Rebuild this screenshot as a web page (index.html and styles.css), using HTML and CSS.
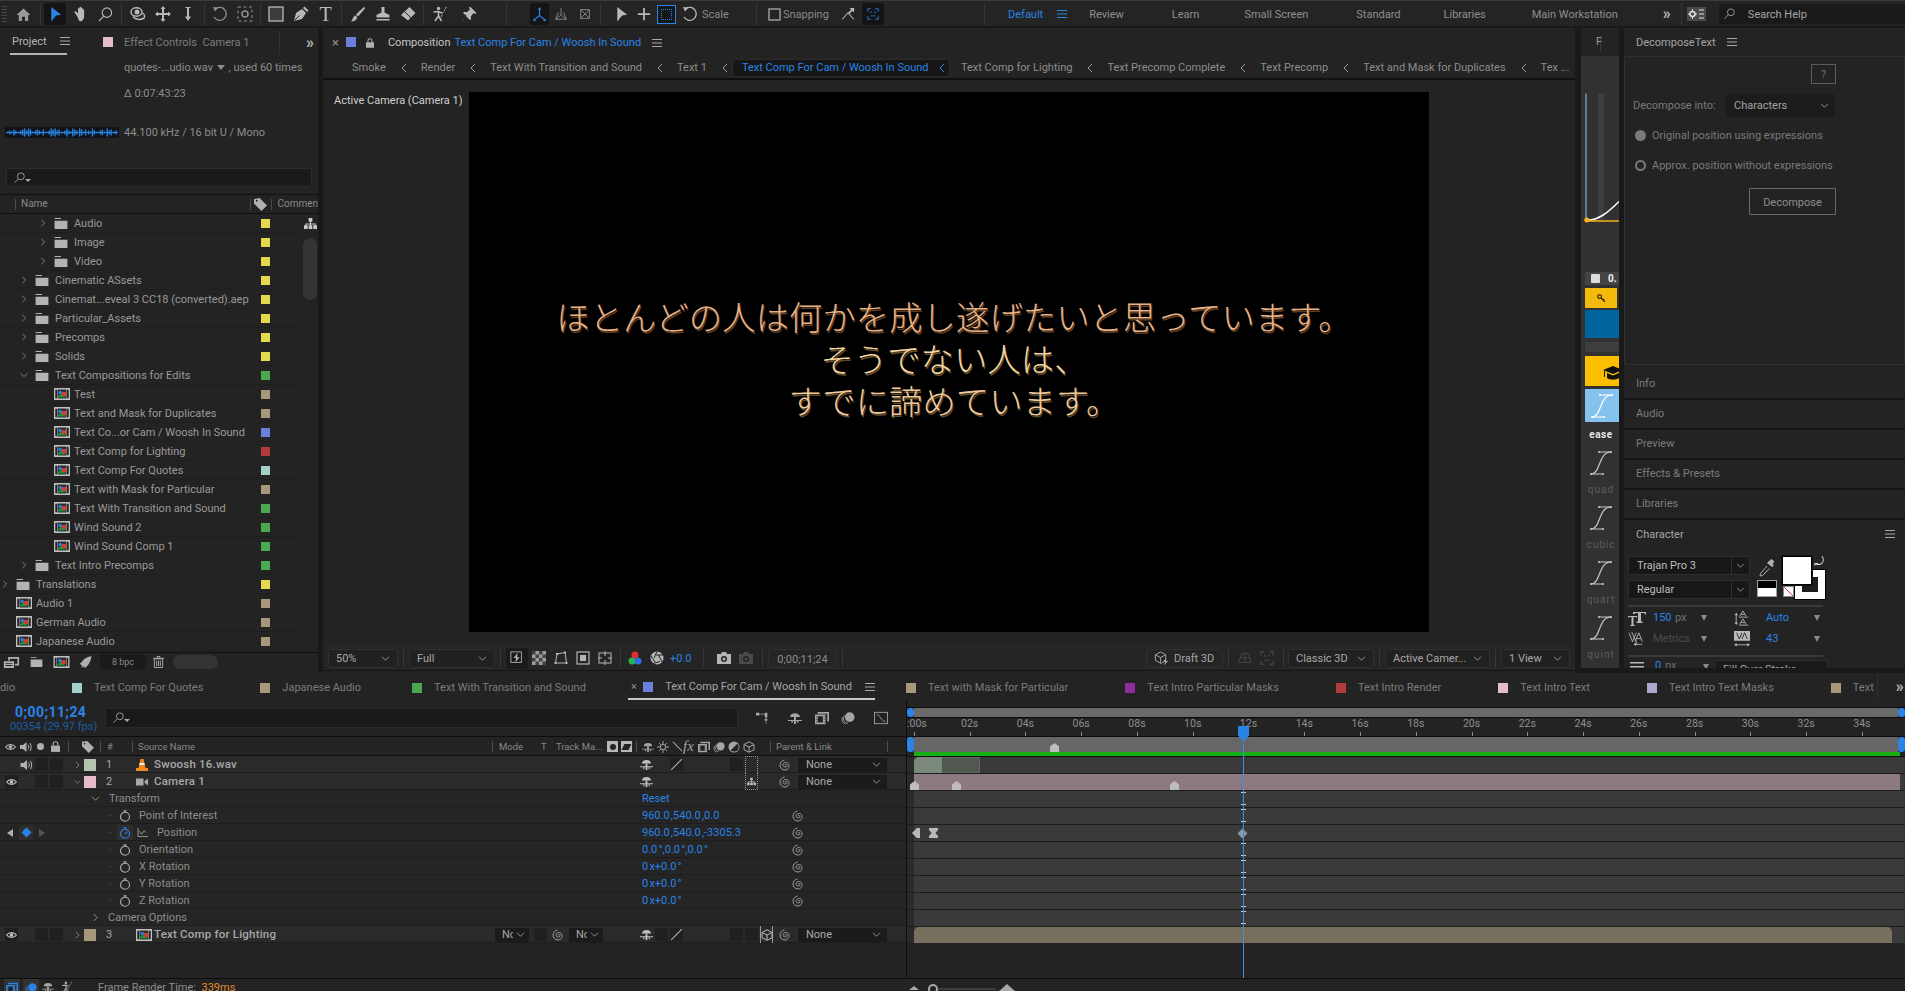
FILE: index.html
```html
<!DOCTYPE html>
<html>
<head>
    <meta charset="UTF-8">
    <meta name="viewport" content="width=device-width, initial-scale=1">
    <title>After Effects</title>
    <link rel="stylesheet" href="styles.css">
</head>
<body>
<svg class="defs" width="0" height="0">
    <symbol id="i-home" viewBox="0 0 16 16"><path fill="currentColor" d="M8 1.5 15.5 8.6H13V15H9.6V10.4H6.4V15H3V8.6H.5Z"/></symbol>
    <symbol id="i-arrow" viewBox="0 0 16 16"><path fill="currentColor" d="M3.5 0 14 8.2 8.6 9 3.5 15.5Z"/></symbol>
    <symbol id="i-hand" viewBox="0 0 16 16"><path fill="currentColor" d="M4 10 1.6 6.6c-.7-1.1.8-2 1.5-1L5 7.6V2.8c0-1.1 1.5-1.1 1.5 0V6.6V1.6c0-1.1 1.6-1.1 1.6 0v5V2.4c0-1.1 1.5-1.1 1.5 0v4.7V4c0-1.1 1.5-1.1 1.5 0v6.6c0 3-2 4.900-3.900 4.900C6 15.500 5.200 12.200 4 10Z"/></symbol>
    <symbol id="i-zoom" viewBox="0 0 16 16"><g fill="none" stroke="currentColor" stroke-width="1.2"><circle cx="9.500" cy="6" r="5"/><path d="M6 9.700 1 15"/></g></symbol>
    <symbol id="i-orbit" viewBox="0 0 16 16"><g fill="none" stroke="currentColor" stroke-width="1.500"><ellipse cx="6.500" cy="6" rx="5.500" ry="4.200"/><path d="M3 10.500c2 3 7 4 11 1.500 1.500-2 0-4-1.500-5"/></g><circle cx="7" cy="6" r="2.500" fill="currentColor"/></symbol>
    <symbol id="i-pan" viewBox="0 0 16 16"><path fill="currentColor" d="M8 0 10.500 3H9V7H13V5.500L16 8 13 10.500V9H9V13H10.500L8 16 5.500 13H7V9H3V10.500L0 8 3 5.500V7H7V3H5.500Z"/></symbol>
    <symbol id="i-dolly" viewBox="0 0 16 16"><path fill="currentColor" d="M5.500 1h5v1H9v8.500h2L8 15 5 10.500h2V2H5.500Z"/></symbol>
    <symbol id="i-rotate" viewBox="0 0 16 16"><path fill="none" stroke="currentColor" stroke-width="1.300" d="M4 2.500A6.500 6.500 0 1 1 2 11"/><path fill="currentColor" d="M1 1 6.500 1.500 3 5.500Z"/></symbol>
    <symbol id="i-anchor" viewBox="0 0 16 16"><rect x="1" y="1" width="14" height="14" fill="none" stroke="currentColor" stroke-dasharray="3 2.500"/><circle cx="8" cy="8" r="3" fill="none" stroke="currentColor" stroke-width="1.500"/></symbol>
    <symbol id="i-rect" viewBox="0 0 16 16"><rect x="1" y="1" width="14" height="14" fill="#3c3c3c" stroke="currentColor" stroke-width="1.300"/></symbol>
    <symbol id="i-pen" viewBox="0 0 16 16"><path fill="currentColor" d="M1 15 3 7 9 3 13 7 9 13ZM10 2 11.500.5 15.500 4.500 14 6Z"/><path stroke="#232323" d="M1.500 14.500 6.500 9.500"/></symbol>
    <symbol id="i-brush" viewBox="0 0 16 16"><path fill="currentColor" d="M14.500 1c.7.5.7 1 .2 1.800L8 10.500 6 8.800C8 6.500 12.500 2 14.500 1ZM5.300 9.500 7.300 11.200C6.500 14.500 3.500 15.500 1 15.500 3 14 2.800 10 5.300 9.500Z"/></symbol>
    <symbol id="i-stamp" viewBox="0 0 16 16"><path fill="currentColor" d="M6.500 1h3v5.500L14.500 9v2.500h-13V9l5-2.500ZM1.500 13h13v1.500h-13Z"/></symbol>
    <symbol id="i-eraser" viewBox="0 0 16 16"><path fill="currentColor" d="M9.500 1 15.500 7 8 14.500 1 9Z"/><path stroke="#232323" d="M4.500 5.500 11 12"/></symbol>
    <symbol id="i-roto" viewBox="0 0 16 16"><circle cx="6.500" cy="2.500" r="1.700" fill="currentColor"/><path fill="none" stroke="currentColor" stroke-width="1.600" d="M1.500 6 6.500 5.500 10 7M6.500 5.500V10L3 15M6.500 10 9.500 15"/><path fill="none" stroke="currentColor" d="M14.500 1 10.500 7.500 9 12" stroke-dasharray="2 1"/></symbol>
    <symbol id="i-pin" viewBox="0 0 16 16"><path fill="currentColor" d="M9 .5 15.500 7 14 8 12.500 7 9.800 10.500 10.200 13 8.800 14 5 10 1 15 1 14.500 5.500 9.800 2 7 3 5.800 5.800 6.200 9 3.500 8 2Z"/></symbol>
    <symbol id="i-axis-a" viewBox="0 0 16 16"><g fill="none" stroke="currentColor" stroke-width="1.300"><path d="M8 1V9L2 14M8 9 14 14"/></g><path fill="currentColor" d="M8 0 10 3H6ZM1 12 2 15.500 4.500 14ZM15 12 14 15.500 11.500 14Z"/></symbol>
    <symbol id="i-axis-b" viewBox="0 0 16 16"><g fill="none" stroke="currentColor"><path d="M8 1V9L2 14H14L8 9M5 6 2 14M11 6 14 14"/></g></symbol>
    <symbol id="i-axis-c" viewBox="0 0 16 16"><g fill="none" stroke="currentColor"><path d="M3 3 13 13M13 3 3 13M3 3H13V13H3Z"/></g></symbol>
    <symbol id="i-move" viewBox="0 0 16 16"><path fill="none" stroke="currentColor" stroke-width="2" d="M8 1V15M1 8H15"/></symbol>
    <symbol id="i-magnet" viewBox="0 0 16 16"><path fill="none" stroke="currentColor" stroke-width="1.200" d="M1.500 14 8 6.500 14.500 14"/><path fill="currentColor" d="M10 1h5v5L13 4.500 9.500 8 8 6.500 11.500 3Z"/></symbol>
    <symbol id="i-snap" viewBox="0 0 16 16"><g fill="none" stroke="currentColor" stroke-width="1.200"><path d="M1 5V1H5M11 1H15V5M15 11V15H11M5 15H1V11"/></g><circle cx="5.500" cy="5.500" r="1" fill="currentColor"/><circle cx="10.500" cy="5.500" r="1" fill="currentColor"/><path stroke="currentColor" d="M5 10.500H11"/></symbol>
    <symbol id="i-sync" viewBox="0 0 19 14"><rect width="19" height="14" fill="#4a4a4a"/><circle cx="5.500" cy="7" r="2.500" fill="none" stroke="#e0e0e0" stroke-width="1.500"/><path stroke="#e0e0e0" d="M5.500 2V4M5.500 10V12M1 7H3M8 7H10M12 3H17M12 7H17M12 11H17"/></symbol>
    <symbol id="i-folder" viewBox="0 0 14 12"><path fill="#b3b3b3" d="M0 3H14V12H0ZM0 0H7V1H0Z"/></symbol>
    <symbol id="i-comp" viewBox="0 0 16 12"><path fill="#bfbfbf" d="M0 0H16V12H0Z"/><path fill="#232323" d="M1.300 1.800H3V10.200H1.300ZM13 1.800H14.700V10.200H13Z"/><path fill="#2d2d2d" d="M3.500 1.500H12.500V10.500H3.500Z"/><path fill="#1e8f3c" d="M4 8 8 5 12 9.500H4Z"/><path fill="#d23c31" d="M8 4H12V8H8Z"/><circle cx="6.200" cy="4.600" r="1.800" fill="#2f7bd8"/></symbol>
    <symbol id="i-chev-r" viewBox="0 0 8 10"><path fill="none" stroke="currentColor" d="M2 1 6 5 2 9"/></symbol>
    <symbol id="i-chev-d" viewBox="0 0 10 8"><path fill="none" stroke="currentColor" d="M1 2 5 6 9 2"/></symbol>
    <symbol id="i-chev-l" viewBox="0 0 8 10"><path fill="none" stroke="currentColor" d="M6 1 2 5 6 9"/></symbol>
    <symbol id="i-menu" viewBox="0 0 10 8"><path stroke="currentColor" d="M0 .5H10M0 4H10M0 7.500H10"/></symbol>
    <symbol id="i-search" viewBox="0 0 14 14"><g fill="none" stroke="currentColor"><circle cx="8" cy="5" r="4"/><path d="M5 8 .5 12.500"/></g></symbol>
    <symbol id="i-tag" viewBox="0 0 14 14"><path fill="currentColor" d="M0 1 6 0 14 8 8 14 0 6Z"/><circle cx="3" cy="3" r="1" fill="#232323"/></symbol>
    <symbol id="i-tree" viewBox="0 0 14 14"><path fill="currentColor" d="M5 1H9V5H5ZM0 9H4V13H0ZM5 9H9V13H5ZM10 9H14V13H10ZM6.500 5H7.500V7H12.500V9H11.500V8H7.500V9H6.500V8H2.500V9H1.500V7H6.500Z"/></symbol>
    <symbol id="i-eye" viewBox="0 0 12 8"><path fill="none" stroke="currentColor" stroke-width="1.200" d="M.6 4C3 .6 9 .6 11.400 4 9 7.400 3 7.400 .6 4Z"/><circle cx="6" cy="4" r="2" fill="currentColor"/></symbol>
    <symbol id="i-speaker" viewBox="0 0 12 12"><path fill="currentColor" d="M0 4H3L6.500 1V11L3 8H0Z"/><path fill="none" stroke="currentColor" d="M8 3.500C9 5 9 7 8 8.500M10 2C11.500 4.500 11.500 7.500 10 10"/></symbol>
    <symbol id="i-lock" viewBox="0 0 10 12"><path fill="currentColor" d="M0 5H10V12H0Z"/><path fill="none" stroke="currentColor" stroke-width="1.300" d="M2.500 5V3C2.500 0 7.500 0 7.500 3V5"/></symbol>
    <symbol id="i-shy" viewBox="0 0 14 12"><path fill="currentColor" d="M2 5C2.500 0 11.500 0 12 5ZM0 8H14V9H0Z"/><path fill="currentColor" d="M6 5H8V12H6ZM3.500 9H5L4.500 11H3.500ZM9 9H10.500V11H9.500Z"/></symbol>
    <symbol id="i-spiral" viewBox="0 0 12 12"><path fill="none" stroke="currentColor" d="M6 6.300C6 5 8 5.200 8 6.500 8 8.500 4.500 8.600 4 6.400 3.500 3.600 7.500 2.500 9.300 4.500 11.200 7 9.300 11 6 11 3 11 .8 8.700 1 6 1.200 3.500 3 1.400 5.500 1"/></symbol>
    <symbol id="i-watch" viewBox="0 0 12 12"><g fill="none" stroke="currentColor" stroke-width="1.100"><circle cx="6" cy="6.800" r="4.500"/><path d="M4.500 .8H7.500M6 .8V2.300"/></g></symbol>
    <symbol id="i-watch-on" viewBox="0 0 12 12"><g fill="none" stroke="currentColor" stroke-width="1.100"><circle cx="6" cy="6.800" r="4.500"/><path d="M4.500 .8H7.500M6 .8V2.300M6 7 8.300 4.700"/></g></symbol>
    <symbol id="i-graph" viewBox="0 0 12 10"><path fill="none" stroke="currentColor" d="M1 0V9.500H12M2 3 5 7 8 3 9.500 5"/></symbol>
    <symbol id="i-cam" viewBox="0 0 12 9"><path fill="currentColor" d="M0 1H7.500V8H0ZM8.500 3.800 12 1V8L8.500 5.200Z"/></symbol>
    <symbol id="i-cone" viewBox="0 0 12 12"><path fill="#f08a1e" d="M4.500 0H7.500L9.500 9H12V12H0V9H2.500Z"/><path fill="#eee" d="M3.700 4H8.300L8.700 6H3.300Z"/></symbol>
    <symbol id="i-cube" viewBox="0 0 12 12"><path fill="none" stroke="currentColor" d="M6 .8 11 3.500V8.800L6 11.200 1 8.800V3.500ZM1 3.500 6 6 11 3.500M6 6V11.200"/></symbol>
    <symbol id="i-ease" viewBox="0 0 24 26"><g fill="none" stroke="currentColor"><path d="M2 24C12 24 9 2 22 2" stroke-width="1.200"/><path d="M2 24H14M10 2H22"/></g><circle cx="2" cy="24" r="1" fill="currentColor"/><circle cx="14" cy="24" r="1" fill="currentColor"/><circle cx="10" cy="2" r="1" fill="currentColor"/><circle cx="22" cy="2" r="1" fill="currentColor"/></symbol>
    <symbol id="i-bolt" viewBox="0 0 16 16"><rect x="1" y="1" width="12" height="12" fill="none" stroke="currentColor"/><path fill="currentColor" d="M9 2 4 8H7L6 13 11 7H8Z"/></symbol>
    <symbol id="i-checker" viewBox="0 0 14 14"><rect width="14" height="14" fill="#9c9c9c"/><path fill="#444" d="M0 0H3.500V3.500H0ZM7 0H10.500V3.500H7ZM3.500 3.500H7V7H3.500ZM10.500 3.500H14V7H10.500ZM0 7H3.500V10.500H0ZM7 7H10.500V10.500H7ZM3.500 10.500H7V14H3.500ZM10.500 10.500H14V14H10.500Z"/></symbol>
    <symbol id="i-mask" viewBox="0 0 14 14"><path fill="none" stroke="currentColor" d="M3 3 11 1.500 12.500 12H1.500Z"/><path fill="currentColor" d="M2 2H4V4H2ZM10 .5H12V2.500H10ZM.5 11H2.500V13H.5ZM11.500 11H13.500V13H11.500Z"/></symbol>
    <symbol id="i-region" viewBox="0 0 14 14"><rect x="1" y="1" width="12" height="12" fill="none" stroke="currentColor" stroke-width="1.200"/><rect x="4" y="4" width="6" height="6" fill="currentColor"/></symbol>
    <symbol id="i-guides" viewBox="0 0 14 14"><rect x="1" y="2" width="12" height="10" fill="none" stroke="currentColor"/><path stroke="currentColor" d="M7 0V5M7 9V14M0 7H4M10 7H14"/></symbol>
    <symbol id="i-rgb" viewBox="0 0 14 14"><circle cx="7" cy="4" r="3.500" fill="#e52b2b"/><circle cx="4" cy="10" r="3.500" fill="#2bb34a"/><circle cx="10" cy="10" r="3.500" fill="#2b6fe5"/></symbol>
    <symbol id="i-aperture" viewBox="0 0 14 14"><circle cx="7" cy="7" r="6.500" fill="currentColor"/><path fill="none" stroke="#232323" d="M7 .5 4 7M13 4 6 4M12 11 8.500 4M3 12.500 10 10.500M1 5 5 11"/></symbol>
    <symbol id="i-camera" viewBox="0 0 14 12"><path fill="currentColor" d="M0 2H4L5 0H9L10 2H14V12H0Z"/><circle cx="7" cy="7" r="3" fill="#232323"/><circle cx="7" cy="7" r="1.500" fill="currentColor"/></symbol>
    <symbol id="i-draft" viewBox="0 0 16 16"><path fill="none" stroke="currentColor" d="M7 1 12.500 4V9L8 13.500 1.500 10V4ZM1.500 4 7 7 12.500 4M7 7V13"/><path fill="currentColor" d="M13 7 9.500 12H12L10.500 16 15 10.500H12.500Z"/></symbol>
    <symbol id="i-floor" viewBox="0 0 16 12"><path fill="none" stroke="currentColor" d="M4 1H12L15 11H1ZM8 1V11M2.500 6H13.500"/></symbol>
    <symbol id="i-trash" viewBox="0 0 12 13"><path fill="none" stroke="currentColor" d="M1.500 3H10.500V12.500H1.500ZM0 2.500H12M4.500 2.500V.5H7.500V2.500M4 5V11M6 5V11M8 5V11"/></symbol>
    <symbol id="i-footage" viewBox="0 0 18 13"><path fill="currentColor" d="M5 0H18V10H13V8H16V2H7V4H5ZM0 5H12V13H0ZM2 7V8H10V7ZM2 9.500V10.500H10V9.500Z"/></symbol>
    <symbol id="i-rocket" viewBox="0 0 14 14"><path fill="currentColor" d="M14 0C8 1 4 4 2 8L0 9 3 11 2 14 5 12 6 14C10 12 13 7 14 0Z"/></symbol>
    <symbol id="i-flow" viewBox="0 0 16 14"><path fill="currentColor" d="M0 1H4V4H0ZM5 2H10V3H5ZM10 1H13V6H10ZM11 6H12V8H11ZM10 8H13V10H10ZM11 11H12V13H11Z"/></symbol>
    <symbol id="i-film" viewBox="0 0 16 14"><path fill="currentColor" d="M3 0H16V11H14V2H3ZM0 3H12V14H0Z"/><path fill="#232323" d="M3 5H9V12H3ZM1 5H2V6H1ZM1 8H2V9H1ZM1 11H2V12H1ZM10 5H11V6H10ZM10 8H11V9H10ZM10 11H11V12H10Z"/></symbol>
    <symbol id="i-blur" viewBox="0 0 16 14"><circle cx="10" cy="6" r="5.500" fill="currentColor"/><g fill="none" stroke="currentColor"><path d="M4 4A5.500 5.500 0 0 0 8 13M2 6A5.500 5.500 0 0 0 5 14"/></g></symbol>
    <symbol id="i-curve" viewBox="0 0 16 14"><rect x=".5" y=".5" width="15" height="13" fill="none" stroke="currentColor"/><path fill="none" stroke="currentColor" d="M3 3C7 3 8 11 13 11"/></symbol>
    <symbol id="i-adj" viewBox="0 0 12 12"><circle cx="6" cy="6" r="5.500" fill="currentColor"/><path fill="#232323" d="M9.500 2.500 2.500 9.500C4.500 11 8 11 9.800 9 11 7 11 4 9.500 2.500Z"/></symbol>
    <symbol id="i-sun" viewBox="0 0 12 12"><circle cx="6" cy="6" r="2.600" fill="none" stroke="currentColor"/><path stroke="currentColor" d="M6 0V3M6 9V12M0 6H3M9 6H12M2 2 3.800 3.800M8.200 8.200 10 10M10 2 8.200 3.800M3.800 8.200 2 10"/></symbol>
    <symbol id="i-key" viewBox="0 0 12 12"><circle cx="3.500" cy="3.500" r="2.500" fill="none" stroke="#1d1300" stroke-width="1.400"/><path stroke="#1d1300" stroke-width="1.400" d="M5.500 5.500 10.500 10.500M8 8 9.500 6.500"/></symbol>
    <symbol id="i-cap" viewBox="0 0 20 20"><path fill="#111" d="M0 7 10 3 20 7 10 11ZM4 10V15C7 17 13 17 16 15V10L10 12.500ZM1 8H2V14H1Z"/></symbol>
    <symbol id="i-drop" viewBox="0 0 16 18"><path fill="none" stroke="currentColor" d="M8 7 1.500 14.500 1 17 3.500 16.500 10.500 9.500"/><path fill="currentColor" d="M10 2 12.500 0 15.500 2.500 13.500 5 15 6.500 13 8 8 4 9.500 2.500Z"/></symbol>
    <symbol id="i-size" viewBox="0 0 18 16"><path fill="currentColor" d="M5 2H18V4.500H17C17 3.500 16.500 3 15.500 3H13V11.500H14.500V13H8.500V11.500H10V3H8C7.500 3 7 3.300 6.800 4H5ZM0 6H9V7.500H8C8 7.200 7.800 7 7.500 7H5.500V14.800H6.500V16H2.500V14.800H3.500V7H1.500C1.200 7 1 7.200 1 7.500H0Z"/></symbol>
    <symbol id="i-lead" viewBox="0 0 18 18"><g fill="none" stroke="currentColor"><path d="M6.500 7 10 1 13.500 7M8 5H12M6.500 16 10 10 13.500 16M8 14H12M5.500 8H16M5.500 17H16M2.500 5V15"/></g><path fill="currentColor" d="M2.500 3 4.500 6H.5ZM2.500 17 4.500 14H.5Z"/></symbol>
    <symbol id="i-va" viewBox="0 0 18 18"><path fill="none" stroke="currentColor" d="M0 2 4 12 8 2M7 12 11 2 15 12M8.500 8.500H13.500M3 1 9 14M6 15H15"/><path fill="currentColor" d="M5 15 8 13V17Z"/></symbol>
    <symbol id="i-vabox" viewBox="0 0 18 18"><rect y="0" width="18" height="11" fill="currentColor"/><path fill="none" stroke="#232323" d="M3 2 6 9 9 2M9 9 12 2 15 9"/><path stroke="currentColor" d="M2 15.500H16"/><path fill="currentColor" d="M0 15.500 3 13.500V17.500ZM18 15.500 15 13.500V17.500Z"/></symbol>
    <symbol id="i-lines" viewBox="0 0 14 10"><path fill="currentColor" d="M0 0H14V1.500H0ZM0 4H14V5.500H0ZM0 8H14V9.500H0Z"/></symbol>
    <symbol id="i-wave" viewBox="0 0 114 10"><path stroke="currentColor" d="M2 4V6M4 3V7M6 4V6M8 2V8M10 3V7M13 4V6M15 3V7M17 2V8M19 1V9M21 3V7M23 1V9M25 2V8M27 4V6M30 3V7M32 2V8M34 3V7M36 4V6M38 2V8M41 4V6M44 3V7M46 1V9M48 2V8M50 1V9M52 3V7M54 2V8M57 4V6M60 3V7M62 1V9M64 3V7M66 4V6M68 1V9M70 2V8M72 3V7M75 1V9M77 2V8M79 4V6M81 2V8M84 3V7M86 4V6M88 1V9M90 3V7M93 4V6M96 3V7M98 2V8M100 4V6M103 1V9M105 3V7M107 2V8M110 4V6M112 3V7" stroke-width="1.400"/><path stroke="currentColor" d="M0 5H114"/></symbol>
</svg>

<div class="toolbar">
    <span class="grip"></span>
    <span class="tool w33"><svg class="ic15"><use href="#i-home"/></svg></span>
    <span class="vsep"></span>
    <span class="tool tool-on w22 ml3 blue"><svg class="ic15"><use href="#i-arrow"/></svg></span>
    <span class="tool w25 ml2 mid"><svg class="ic16"><use href="#i-hand"/></svg></span>
    <span class="tool w25 mid"><svg class="ic15"><use href="#i-zoom"/></svg></span>
    <span class="vsep ml3"></span>
    <span class="tool w25 ml3 mid"><svg class="ic16"><use href="#i-orbit"/></svg></span>
    <span class="tool w25 mid"><svg class="ic16"><use href="#i-pan"/></svg></span>
    <span class="tool w25 mid"><svg class="ic16"><use href="#i-dolly"/></svg></span>
    <span class="vsep ml4"></span>
    <span class="tool w25 ml2 dim"><svg class="ic16"><use href="#i-rotate"/></svg></span>
    <span class="tool w25 dim"><svg class="ic16"><use href="#i-anchor"/></svg></span>
    <span class="vsep ml3"></span>
    <span class="tool w25 ml2 mid"><svg class="ic16"><use href="#i-rect"/></svg></span>
    <span class="tool w25 mid"><svg class="ic16"><use href="#i-pen"/></svg></span>
    <span class="tool w25 mid tee">T</span>
    <span class="vsep ml3"></span>
    <span class="tool w25 ml3 mid"><svg class="ic16"><use href="#i-brush"/></svg></span>
    <span class="tool w25 mid"><svg class="ic16"><use href="#i-stamp"/></svg></span>
    <span class="tool w25 mid"><svg class="ic16"><use href="#i-eraser"/></svg></span>
    <span class="vsep ml3"></span>
    <span class="tool w25 ml3 mid"><svg class="ic16"><use href="#i-roto"/></svg></span>
    <span class="tool w25 ml4 mid"><svg class="ic16"><use href="#i-pin"/></svg></span>
    <span class="vsep ml25"></span>
    <span class="tool tool-on w19 ml23 blue"><svg class="ic15"><use href="#i-axis-a"/></svg></span>
    <span class="tool w23 dim"><svg class="ic14"><use href="#i-axis-b"/></svg></span>
    <span class="tool w26 dim"><svg class="ic14"><use href="#i-axis-c"/></svg></span>
    <span class="vsep ml2"></span>
    <span class="tool w20 ml10 mid"><svg class="ic15"><use href="#i-arrow"/></svg></span>
    <span class="tool w22 ml2 mid"><svg class="ic14"><use href="#i-move"/></svg></span>
    <span class="tool tool-box w19 ml2"><span class="tool-box-in"></span></span>
    <span class="tool w20 ml4 mid"><svg class="ic16"><use href="#i-rotate"/></svg></span>
    <span class="tb-label scale">Scale</span>
    <span class="vsep ml28"></span>
    <span class="check"></span>
    <span class="tb-label snapping">Snapping</span>
    <span class="tool w18 ml10 mid"><svg class="ic14"><use href="#i-magnet"/></svg></span>
    <span class="tool tool-on w22 ml5 blue"><svg class="ic12"><use href="#i-snap"/></svg></span>
    <span class="vsep ml100"></span>
    <span class="ws ws-on ws-default">Default</span>
    <svg class="ic-menu blue ws-menu"><use href="#i-menu"/></svg>
    <span class="ws ws-review">Review</span>
    <span class="ws ws-learn">Learn</span>
    <span class="ws ws-small">Small Screen</span>
    <span class="ws ws-std">Standard</span>
    <span class="ws ws-lib">Libraries</span>
    <span class="ws ws-main">Main Workstation</span>
    <span class="chevs ws-more">»</span>
    <span class="vsep ml10"></span>
    <svg class="sync"><use href="#i-sync"/></svg>
    <span class="help"><svg class="ic12"><use href="#i-search"/></svg><span>Search Help</span></span>
</div>

<div class="upper">
    <div class="project">
        <div class="tabbar">
            <span class="tab tab-on"><span>Project</span><svg class="ic-menu"><use href="#i-menu"/></svg></span>
            <span class="swatch sw-pink effect-sw"></span>
            <span class="effect-name">Effect Controls&nbsp; Camera 1</span>
            <span class="tab-sep"></span>
            <span class="chevs">»</span>
        </div>
        <div class="meta">
            <div class="meta-line meta-file">quotes-...udio.wav <span class="tri"></span> , used 60 times</div>
            <div class="meta-line">Δ 0:07:43:23</div>
            <div class="meta-wave">
                <svg class="wave"><use href="#i-wave"/></svg>
                <span>44.100 kHz / 16 bit U / Mono</span>
            </div>
        </div>
        <div class="search"><svg class="ic12"><use href="#i-search"/></svg><span class="tri tri-s"></span></div>
        <div class="list-head">
            <span class="hsep"></span><span class="head-name">Name</span>
            <span class="hsep"></span><svg class="ic13"><use href="#i-tag"/></svg>
            <span class="hsep"></span><span class="head-com">Commen</span>
        </div>
        <div class="list-body">
            <div class="list">
                <div class="row l2"><svg class="tw"><use href="#i-chev-r"/></svg><span class="fi"><svg class="folder"><use href="#i-folder"/></svg></span><span class="name">Audio</span><span class="swatch sw-yellow"></span></div>
                <div class="row l2"><svg class="tw"><use href="#i-chev-r"/></svg><span class="fi"><svg class="folder"><use href="#i-folder"/></svg></span><span class="name">Image</span><span class="swatch sw-yellow"></span></div>
                <div class="row l2"><svg class="tw"><use href="#i-chev-r"/></svg><span class="fi"><svg class="folder"><use href="#i-folder"/></svg></span><span class="name">Video</span><span class="swatch sw-yellow"></span></div>
                <div class="row l1"><svg class="tw"><use href="#i-chev-r"/></svg><span class="fi"><svg class="folder"><use href="#i-folder"/></svg></span><span class="name">Cinematic ASsets</span><span class="swatch sw-yellow"></span></div>
                <div class="row l1"><svg class="tw"><use href="#i-chev-r"/></svg><span class="fi"><svg class="folder"><use href="#i-folder"/></svg></span><span class="name">Cinemat...eveal 3 CC18 (converted).aep</span><span class="swatch sw-yellow"></span></div>
                <div class="row l1"><svg class="tw"><use href="#i-chev-r"/></svg><span class="fi"><svg class="folder"><use href="#i-folder"/></svg></span><span class="name">Particular_Assets</span><span class="swatch sw-yellow"></span></div>
                <div class="row l1"><svg class="tw"><use href="#i-chev-r"/></svg><span class="fi"><svg class="folder"><use href="#i-folder"/></svg></span><span class="name">Precomps</span><span class="swatch sw-yellow"></span></div>
                <div class="row l1"><svg class="tw"><use href="#i-chev-r"/></svg><span class="fi"><svg class="folder"><use href="#i-folder"/></svg></span><span class="name">Solids</span><span class="swatch sw-yellow"></span></div>
                <div class="row l1"><svg class="tw"><use href="#i-chev-d"/></svg><span class="fi"><svg class="folder"><use href="#i-folder"/></svg></span><span class="name">Text Compositions for Edits</span><span class="swatch sw-green"></span></div>
                <div class="row l2"><span class="tw"></span><span class="fi"><svg class="comp"><use href="#i-comp"/></svg></span><span class="name">Test</span><span class="swatch sw-tan"></span></div>
                <div class="row l2"><span class="tw"></span><span class="fi"><svg class="comp"><use href="#i-comp"/></svg></span><span class="name">Text and Mask for Duplicates</span><span class="swatch sw-tan"></span></div>
                <div class="row l2"><span class="tw"></span><span class="fi"><svg class="comp"><use href="#i-comp"/></svg></span><span class="name">Text Co...or Cam / Woosh In Sound</span><span class="swatch sw-blue"></span></div>
                <div class="row l2"><span class="tw"></span><span class="fi"><svg class="comp"><use href="#i-comp"/></svg></span><span class="name">Text Comp for Lighting</span><span class="swatch sw-red"></span></div>
                <div class="row l2"><span class="tw"></span><span class="fi"><svg class="comp"><use href="#i-comp"/></svg></span><span class="name">Text Comp For Quotes</span><span class="swatch sw-aqua"></span></div>
                <div class="row l2"><span class="tw"></span><span class="fi"><svg class="comp"><use href="#i-comp"/></svg></span><span class="name">Text with Mask for Particular</span><span class="swatch sw-tan"></span></div>
                <div class="row l2"><span class="tw"></span><span class="fi"><svg class="comp"><use href="#i-comp"/></svg></span><span class="name">Text With Transition and Sound</span><span class="swatch sw-green"></span></div>
                <div class="row l2"><span class="tw"></span><span class="fi"><svg class="comp"><use href="#i-comp"/></svg></span><span class="name">Wind Sound 2</span><span class="swatch sw-green"></span></div>
                <div class="row l2"><span class="tw"></span><span class="fi"><svg class="comp"><use href="#i-comp"/></svg></span><span class="name">Wind Sound Comp 1</span><span class="swatch sw-green"></span></div>
                <div class="row l1"><svg class="tw"><use href="#i-chev-r"/></svg><span class="fi"><svg class="folder"><use href="#i-folder"/></svg></span><span class="name">Text Intro Precomps</span><span class="swatch sw-green"></span></div>
                <div class="row l0"><svg class="tw"><use href="#i-chev-r"/></svg><span class="fi"><svg class="folder"><use href="#i-folder"/></svg></span><span class="name">Translations</span><span class="swatch sw-yellow"></span></div>
                <div class="row l0"><span class="tw"></span><span class="fi"><svg class="comp"><use href="#i-comp"/></svg></span><span class="name">Audio 1</span><span class="swatch sw-tan"></span></div>
                <div class="row l0"><span class="tw"></span><span class="fi"><svg class="comp"><use href="#i-comp"/></svg></span><span class="name">German Audio</span><span class="swatch sw-tan"></span></div>
                <div class="row l0"><span class="tw"></span><span class="fi"><svg class="comp"><use href="#i-comp"/></svg></span><span class="name">Japanese Audio</span><span class="swatch sw-tan"></span></div>
            </div>
            <div class="list-side">
                <svg class="ic13 tree"><use href="#i-tree"/></svg>
                <span class="scroll-thumb"></span>
            </div>
        </div>
        <div class="project-foot">
            <svg class="foot-footage"><use href="#i-footage"/></svg>
            <svg class="foot-folder"><use href="#i-folder"/></svg>
            <svg class="foot-comp"><use href="#i-comp"/></svg>
            <svg class="foot-rocket"><use href="#i-rocket"/></svg>
            <span class="bpc">8 bpc</span>
            <svg class="foot-trash"><use href="#i-trash"/></svg>
            <span class="pill"></span>
        </div>
    </div>

    <div class="comp-panel">
        <div class="tabbar comp-tabs">
            <span class="x">×</span>
            <span class="swatch sw-blue"></span>
            <svg class="lock-ic"><use href="#i-lock"/></svg>
            <span class="comp-word">Composition</span>
            <span class="comp-blue">Text Comp For Cam / Woosh In Sound</span>
            <svg class="ic-menu ml11"><use href="#i-menu"/></svg>
        </div>
        <div class="crumbs">
            <span class="crumb c-smoke">Smoke</span><svg class="lt"><use href="#i-chev-l"/></svg>
            <span class="crumb">Render</span><svg class="lt"><use href="#i-chev-l"/></svg>
            <span class="crumb">Text With Transition and Sound</span><svg class="lt"><use href="#i-chev-l"/></svg>
            <span class="crumb">Text 1</span><svg class="lt lt-tight"><use href="#i-chev-l"/></svg>
            <span class="crumb-on"><span>Text Comp For Cam / Woosh In Sound</span><svg class="lt-on"><use href="#i-chev-l"/></svg></span>
            <span class="crumb c-after">Text Comp for Lighting</span><svg class="lt"><use href="#i-chev-l"/></svg>
            <span class="crumb">Text Precomp Complete</span><svg class="lt"><use href="#i-chev-l"/></svg>
            <span class="crumb">Text Precomp</span><svg class="lt"><use href="#i-chev-l"/></svg>
            <span class="crumb">Text and Mask for Duplicates</span><svg class="lt"><use href="#i-chev-l"/></svg>
            <span class="crumb">Tex ...</span>
        </div>
        <div class="viewer">
            <div class="cam-label">Active Camera (Camera 1)</div>
            <div class="frame">
                <p class="jp jp1">ほとんどの人は何かを成し遂げたいと思っています。</p>
                <p class="jp jp2">そうでない人は、</p>
                <p class="jp jp3">すでに諦めています。</p>
            </div>
        </div>
        <div class="comp-foot">
            <span class="cf-drop cf-50"><span>50%</span><svg class="cv"><use href="#i-chev-d"/></svg></span>
            <span class="fsep"></span>
            <span class="cf-drop cf-full"><span>Full</span><svg class="cv"><use href="#i-chev-d"/></svg></span>
            <span class="fsep"></span>
            <span class="cf-ic cf-on"><svg class="ic14"><use href="#i-bolt"/></svg></span>
            <span class="cf-ic"><svg class="ic14"><use href="#i-checker"/></svg></span>
            <span class="cf-ic"><svg class="ic14"><use href="#i-mask"/></svg></span>
            <span class="cf-ic"><svg class="ic14"><use href="#i-region"/></svg></span>
            <span class="cf-ic"><svg class="ic14"><use href="#i-guides"/></svg></span>
            <span class="fsep fs-a"></span>
            <span class="cf-ic cf-rgb"><svg class="ic14"><use href="#i-rgb"/></svg></span>
            <span class="cf-ic"><svg class="ic14"><use href="#i-aperture"/></svg></span>
            <span class="plus">+0.0</span>
            <span class="fsep fs-b"></span>
            <span class="cf-ic"><svg class="ic14"><use href="#i-camera"/></svg></span>
            <span class="cf-ic cf-dim"><svg class="ic14"><use href="#i-camera"/></svg></span>
            <span class="fsep"></span>
            <span class="cf-time">0;00;11;24</span>
            <span class="fsep"></span>
            <span class="cf-draft"><svg class="ic15"><use href="#i-draft"/></svg><span>Draft 3D</span></span>
            <span class="fsep"></span>
            <span class="cf-ic cf-dim"><svg class="ic14"><use href="#i-floor"/></svg></span>
            <span class="cf-ic cf-dim"><svg class="ic14"><use href="#i-snap"/></svg></span>
            <span class="fsep fs-c"></span>
            <span class="cf-drop cf-classic"><span>Classic 3D</span><svg class="cv"><use href="#i-chev-d"/></svg></span>
            <span class="fsep"></span>
            <span class="cf-drop cf-active"><span>Active Camer...</span><svg class="cv"><use href="#i-chev-d"/></svg></span>
            <span class="fsep"></span>
            <span class="cf-drop cf-view"><span>1 View</span><svg class="cv"><use href="#i-chev-d"/></svg></span>
        </div>
    </div>

    <div class="strip">
        <div class="strip-tab"><span>F</span></div>
        <div class="strip-body">
            <svg class="curve" viewBox="0 0 34 127"><path fill="#3f3f3f" d="M13 0H19V127H13Z"/><path stroke="#8cc6ee" d="M1 0V127"/><path fill="none" stroke="#fff" stroke-width="1.500" d="M1 127C14 127 24 118 34 108"/><path stroke="#f5b21e" stroke-width="1.500" d="M1 127.500H34"/><circle cx="1.800" cy="126.500" r="2.500" fill="#f5b21e"/></svg>
            <div class="s-small"><span class="s-chip"></span><b>0.</b></div>
            <div class="s-key"><svg class="ic9"><use href="#i-key"/></svg></div>
            <div class="s-blue"></div>
            <div class="s-gray"></div>
            <div class="s-cap"><svg class="cap"><use href="#i-cap"/></svg></div>
            <div class="s-ease-on"><svg class="ease-ic"><use href="#i-ease"/></svg></div>
            <div class="s-label s-label-on">ease</div>
            <div class="s-ic"><svg class="ease-ic"><use href="#i-ease"/></svg></div>
            <div class="s-label">quad</div>
            <div class="s-ic"><svg class="ease-ic"><use href="#i-ease"/></svg></div>
            <div class="s-label">cubic</div>
            <div class="s-ic"><svg class="ease-ic"><use href="#i-ease"/></svg></div>
            <div class="s-label">quart</div>
            <div class="s-ic"><svg class="ease-ic"><use href="#i-ease"/></svg></div>
            <div class="s-label">quint</div>
        </div>
    </div>

    <div class="right">
        <div class="decomp-tab"><span>DecomposeText</span><svg class="ic-menu"><use href="#i-menu"/></svg></div>
        <div class="decomp">
            <div class="help-row"><span class="q">?</span></div>
            <div class="into"><span>Decompose into:</span><span class="into-drop"><span>Characters</span><svg class="cv"><use href="#i-chev-d"/></svg></span></div>
            <div class="radio"><span class="dot dot-on"></span><span>Original position using expressions</span></div>
            <div class="radio radio-2"><span class="dot"></span><span>Approx. position without expressions</span></div>
            <div class="btn-row"><span class="btn">Decompose</span></div>
        </div>
        <div class="fold">Info</div>
        <div class="fold">Audio</div>
        <div class="fold">Preview</div>
        <div class="fold">Effects &amp; Presets</div>
        <div class="fold">Libraries</div>
        <div class="char-head"><span>Character</span><svg class="ic-menu"><use href="#i-menu"/></svg></div>
        <div class="char">
            <div class="char-top">
                <div class="char-fonts">
                    <span class="fontbox"><span>Trajan Pro 3</span><i><svg class="cv"><use href="#i-chev-d"/></svg></i></span>
                    <span class="fontbox"><span>Regular</span><i><svg class="cv"><use href="#i-chev-d"/></svg></i></span>
                </div>
                <div class="char-tools">
                    <svg class="dropper"><use href="#i-drop"/></svg>
                    <span class="bw"></span>
                </div>
                <div class="colors">
                    <span class="stroke-sw"></span>
                    <span class="fill-sw"></span>
                    <span class="none-sw"></span>
                    <span class="swap">⤾</span>
                </div>
            </div>
            <div class="char-line"></div>
            <div class="char-grid">
                <svg class="c-ic"><use href="#i-size"/></svg><span class="c-val">150</span><span class="c-unit">px</span><span class="c-tri"></span>
                <svg class="c-ic c-ic2"><use href="#i-lead"/></svg><span class="c-val c-val2">Auto</span><span class="c-tri c-tri2"></span>
                <svg class="c-ic"><use href="#i-va"/></svg><span class="c-off">Metrics</span><span class="c-tri"></span>
                <svg class="c-ic c-ic2"><use href="#i-vabox"/></svg><span class="c-val c-val2">43</span><span class="c-tri c-tri2"></span>
            </div>
            <div class="char-line"></div>
            <div class="char-last">
                <svg class="c-ic"><use href="#i-lines"/></svg><span class="c-val">0</span><span class="c-unit">px</span><span class="c-tri"></span>
                <span class="over"><span>Fill Over Stroke</span><svg class="cv"><use href="#i-chev-d"/></svg></span>
            </div>
        </div>
    </div>
</div>

<div class="timeline">
    <div class="tl-tabs">
        <span class="tt tt-first">dio</span>
        <span class="tt"><span class="swatch sw-aqua"></span>Text Comp For Quotes</span>
        <span class="tt"><span class="swatch sw-tan"></span>Japanese Audio</span>
        <span class="tt tt-third"><span class="swatch sw-green"></span>Text With Transition and Sound</span>
        <span class="tt tt-on"><span class="x">×</span><span class="swatch sw-blue"></span>Text Comp For Cam / Woosh In Sound<svg class="ic-menu"><use href="#i-menu"/></svg></span>
        <span class="tt tt-after"><span class="swatch sw-tan"></span>Text with Mask for Particular</span>
        <span class="tt"><span class="swatch sw-purple"></span>Text Intro Particular Masks</span>
        <span class="tt"><span class="swatch sw-red"></span>Text Intro Render</span>
        <span class="tt"><span class="swatch sw-pink"></span>Text Intro Text</span>
        <span class="tt"><span class="swatch sw-lav"></span>Text Intro Text Masks</span>
        <span class="tt"><span class="swatch sw-tan"></span>Text</span>
        <span class="tab-sep tt-sep"></span>
        <span class="chevs">»</span>
    </div>
    <div class="tl-body">
        <div class="tl-left">
            <div class="tl-ctrl">
                <div class="timecode"><div class="tc-big">0;00;11;24</div><div class="tc-small">00354 (29.97 fps)</div></div>
                <div class="tl-search"><svg class="ic12"><use href="#i-search"/></svg><span class="tri tri-s"></span></div>
                <div class="tl-tools">
                    <svg class="ic14"><use href="#i-flow"/></svg>
                    <svg class="ic14"><use href="#i-shy"/></svg>
                    <svg class="ic14"><use href="#i-film"/></svg>
                    <svg class="ic14"><use href="#i-blur"/></svg>
                    <svg class="ic14"><use href="#i-curve"/></svg>
                </div>
            </div>
            <div class="tl-head">
                <svg class="h-eye"><use href="#i-eye"/></svg>
                <svg class="h-spk"><use href="#i-speaker"/></svg>
                <span class="h-dot"></span>
                <svg class="h-lock"><use href="#i-lock"/></svg>
                <span class="hsep h-s1"></span>
                <svg class="h-tag"><use href="#i-tag"/></svg>
                <span class="hsep h-s2"></span>
                <span class="h-num">#</span>
                <span class="hsep h-s3"></span>
                <span class="h-src">Source Name</span>
                <span class="hsep h-s4"></span>
                <span class="h-mode">Mode</span>
                <span class="h-t">T</span>
                <span class="h-track">Track Ma...</span>
                <span class="h-box"><span class="h-box-in"></span></span>
                <span class="h-box h-box2"><span class="h-box-slash"></span></span>
                <span class="hsep h-s5"></span>
                <svg class="h-sw"><use href="#i-shy"/></svg>
                <svg class="h-sw"><use href="#i-sun"/></svg>
                <span class="h-sl"></span>
                <span class="h-fx">fx</span>
                <svg class="h-sw"><use href="#i-film"/></svg>
                <svg class="h-sw"><use href="#i-blur"/></svg>
                <svg class="h-sw"><use href="#i-adj"/></svg>
                <svg class="h-sw"><use href="#i-cube"/></svg>
                <span class="hsep h-s6"></span>
                <span class="h-par">Parent &amp; Link</span>
                <span class="hsep h-s7"></span>
            </div>
            <div class="layer">
                <span class="c-eye"></span><svg class="c-spk"><use href="#i-speaker"/></svg><span class="c-box"></span><span class="c-box"></span>
                <svg class="l-tw"><use href="#i-chev-r"/></svg><span class="l-sw sw-sage"></span><span class="l-num">1</span>
                <span class="l-ic"><svg class="ic12"><use href="#i-cone"/></svg></span><span class="l-name">Swoosh 16.wav</span>
                <span class="sw-col"><span class="sw-ic"><svg class="ic13"><use href="#i-shy"/></svg></span><span class="sw-empty"></span><span class="sw-ic sw-b"><span class="slash"></span></span><span class="sw-gap"></span><span class="sw-b sw-square"></span><span class="dotted dotted-top"></span></span>
                <svg class="l-spiral"><use href="#i-spiral"/></svg><span class="parent"><span>None</span><svg class="cv"><use href="#i-chev-d"/></svg></span>
            </div>
            <div class="layer">
                <span class="c-eye on"><svg class="c-eye-ic"><use href="#i-eye"/></svg></span><span class="c-spk"></span><span class="c-box"></span><span class="c-box"></span>
                <svg class="l-tw"><use href="#i-chev-d"/></svg><span class="l-sw sw-pink"></span><span class="l-num">2</span>
                <span class="l-ic"><svg class="ic12"><use href="#i-cam"/></svg></span><span class="l-name">Camera 1</span>
                <span class="sw-col"><span class="sw-ic"><svg class="ic13"><use href="#i-shy"/></svg></span><span class="sw-empty"></span><span class="sw-ic"></span><span class="sw-gap"></span><span class="sw-none"></span><span class="dotted dotted-low"><svg class="ic9"><use href="#i-tree"/></svg></span></span>
                <svg class="l-spiral"><use href="#i-spiral"/></svg><span class="parent"><span>None</span><svg class="cv"><use href="#i-chev-d"/></svg></span>
            </div>
            <div class="prop p-group">
                <svg class="p-tw"><use href="#i-chev-d"/></svg><span class="p-gname">Transform</span><span class="p-val p-reset">Reset</span>
            </div>
            <div class="prop"><span class="p-nav"></span><span class="p-dot"></span><svg class="p-watch"><use href="#i-watch"/></svg><span class="p-name">Point of Interest</span><span class="p-val">960.0 ,540.0 ,0.0</span><svg class="p-spiral"><use href="#i-spiral"/></svg></div>
            <div class="prop">
                <span class="p-nav"><span class="nav-l"></span><span class="nav-key"><span class="nav-dia"></span></span><span class="nav-r"></span></span>
                <span class="p-dot"></span><span class="p-watch-on"><svg class="p-watch blue"><use href="#i-watch-on"/></svg></span><svg class="p-graph"><use href="#i-graph"/></svg><span class="p-name p-name2">Position</span><span class="p-val">960.0 ,540.0 ,-3305.3</span><svg class="p-spiral"><use href="#i-spiral"/></svg>
            </div>
            <div class="prop"><span class="p-nav"></span><span class="p-dot"></span><svg class="p-watch"><use href="#i-watch"/></svg><span class="p-name">Orientation</span><span class="p-val">0.0 °,0.0 °,0.0 °</span><svg class="p-spiral"><use href="#i-spiral"/></svg></div>
            <div class="prop"><span class="p-nav"></span><span class="p-dot"></span><svg class="p-watch"><use href="#i-watch"/></svg><span class="p-name">X Rotation</span><span class="p-val">0 x+0.0 °</span><svg class="p-spiral"><use href="#i-spiral"/></svg></div>
            <div class="prop"><span class="p-nav"></span><span class="p-dot"></span><svg class="p-watch"><use href="#i-watch"/></svg><span class="p-name">Y Rotation</span><span class="p-val">0 x+0.0 °</span><svg class="p-spiral"><use href="#i-spiral"/></svg></div>
            <div class="prop"><span class="p-nav"></span><span class="p-dot"></span><svg class="p-watch"><use href="#i-watch"/></svg><span class="p-name">Z Rotation</span><span class="p-val">0 x+0.0 °</span><svg class="p-spiral"><use href="#i-spiral"/></svg></div>
            <div class="prop p-group">
                <svg class="p-tw p-tw-r"><use href="#i-chev-r"/></svg><span class="p-gname">Camera Options</span>
            </div>
            <div class="layer">
                <span class="c-eye on"><svg class="c-eye-ic"><use href="#i-eye"/></svg></span><span class="c-spk"></span><span class="c-box"></span><span class="c-box"></span>
                <svg class="l-tw"><use href="#i-chev-r"/></svg><span class="l-sw sw-tan"></span><span class="l-num">3</span>
                <span class="l-ic"><svg class="comp"><use href="#i-comp"/></svg></span><span class="l-name l-name3">Text Comp for Lighting</span>
                <span class="mode-col">
                    <span class="mini"><span>Nc</span><svg class="cv"><use href="#i-chev-d"/></svg></span>
                    <span class="sw-b sw-square"></span>
                    <svg class="mode-spiral"><use href="#i-spiral"/></svg>
                    <span class="mini"><span>Nc</span><svg class="cv"><use href="#i-chev-d"/></svg></span>
                </span>
                <span class="sw-col sw-col3"><span class="sw-ic"><svg class="ic13"><use href="#i-shy"/></svg></span><span class="sw-empty sw-b"></span><span class="sw-ic sw-b"><span class="slash"></span></span><span class="sw-b sw-square sw-gap3"></span><span class="sw-b sw-square"></span><span class="dotted dotted-solid"><svg class="ic12"><use href="#i-cube"/></svg></span></span>
                <svg class="l-spiral"><use href="#i-spiral"/></svg><span class="parent"><span>None</span><svg class="cv"><use href="#i-chev-d"/></svg></span>
            </div>
        </div>
        <div class="tl-right">
            <div class="nav-bar"><span class="nav-h"></span><span class="nav-fill"></span><span class="nav-h"></span></div>
            <div class="ruler">
                <span class="tick"><b>0:00s</b></span><span class="tick"><b>02s</b></span><span class="tick"><b>04s</b></span><span class="tick"><b>06s</b></span><span class="tick"><b>08s</b></span><span class="tick"><b>10s</b></span><span class="tick"><b>12s</b></span><span class="tick"><b>14s</b></span><span class="tick"><b>16s</b></span><span class="tick"><b>18s</b></span><span class="tick"><b>20s</b></span><span class="tick"><b>22s</b></span><span class="tick"><b>24s</b></span><span class="tick"><b>26s</b></span><span class="tick"><b>28s</b></span><span class="tick"><b>30s</b></span><span class="tick"><b>32s</b></span><span class="tick"><b>34s</b></span>
            </div>
            <div class="work"><span class="nav-h"></span><span class="work-fill"><span class="mark m-work"></span></span><span class="nav-h"></span></div>
            <div class="green-bar"></div>
            <div class="track"><span class="bar bar-a"></span><span class="bar bar-b"></span></div>
            <div class="track"><span class="bar bar-pink"><span class="mark m-1"></span><span class="mark m-2"></span><span class="mark m-3"></span></span></div>
            <div class="track t-beam"><span class="beam"></span></div>
            <div class="track t-beam"><span class="beam"></span></div>
            <div class="track t-keys"><span class="k-left"></span><span class="k-beam"></span><span class="k-dia"></span></div>
            <div class="track t-beam"><span class="beam"></span></div>
            <div class="track t-beam"><span class="beam"></span></div>
            <div class="track t-beam"><span class="beam"></span></div>
            <div class="track t-beam"><span class="beam"></span></div>
            <div class="track t-beam"><span class="beam"></span></div>
            <div class="track"><span class="bar bar-tan"></span></div>
            <div class="tl-rest"></div>
            <span class="playhead"></span>
            <span class="phead-top"></span>
        </div>
    </div>
    <div class="tl-foot">
        <span class="tf-box"><svg class="ic12 blue"><use href="#i-film"/></svg></span>
        <span class="tf-box"><svg class="ic12 blue"><use href="#i-blur"/></svg></span>
        <svg class="ic12 tf-ic"><use href="#i-shy"/></svg>
        <svg class="ic12 tf-ic"><use href="#i-roto"/></svg>
        <span class="render">Frame Render Time:&nbsp; <em>339ms</em></span>
        <span class="zoom-tri"></span>
        <span class="zoom-knob"></span>
        <span class="zoom-line"></span>
        <span class="zoom-tri zoom-big"></span>
    </div>
</div>
</body>
</html>
```

FILE: styles.css
```css
* {
    box-sizing: border-box;
}

html, body {
    margin: 0;
    padding: 0;
    height: 100%;
}

body {
    width: 1905px;
    height: 991px;
    overflow: hidden;
    background-color: #191919;
    color: #9a9a9a;
    font-family: Roboto, 'Noto Sans', sans-serif;
    font-size: 11px;
    line-height: 1;
}

svg {
    display: block;
    flex: none;
}

p {
    margin: 0;
}

.defs {
    position: absolute;
}

/* 小图标尺寸 */
.ic9 { width: 9px; height: 9px; }
.ic12 { width: 12px; height: 12px; }
.ic13 { width: 13px; height: 13px; }
.ic14 { width: 14px; height: 14px; }
.ic15 { width: 15px; height: 15px; }
.ic16 { width: 16px; height: 16px; }
.ic-menu { width: 10px; height: 8px; color: #a8a8a8; }
.cv { width: 9px; height: 7px; color: #a0a0a0; flex: none; }

.blue { color: #2a84e6 !important; }
.mid { color: #b8b8b8; }
.dim { color: #8e8e8e; }

.ml2 { margin-left: 2px; }
.ml3 { margin-left: 3px; }
.ml4 { margin-left: 4px; }
.ml5 { margin-left: 5px; }
.ml10 { margin-left: 10px; }
.ml11 { margin-left: 11px; }
.ml23 { margin-left: 23px; }
.ml25 { margin-left: 25px; }
.ml28 { margin-left: 28px; }
.ml100 { margin-left: 100px; }

.w18 { width: 18px; }
.w19 { width: 19px; }
.w20 { width: 20px; }
.w22 { width: 22px; }
.w23 { width: 23px; }
.w25 { width: 25px; }
.w26 { width: 26px; }
.w33 { width: 33px; }

/* 顶部工具栏 */
.toolbar {
    display: flex;
    align-items: center;
    height: 26px;
    padding-top: 1px;
    border-top: 1px solid #3a3a3a;
    background-color: #242424;
}

.grip {
    width: 5px;
    height: 16px;
    margin-left: 2px;
    background: repeating-linear-gradient(#4a4a4a 0 1px, transparent 1px 3px);
}

.tool {
    display: flex;
    align-items: center;
    justify-content: center;
    height: 22px;
    flex: none;
}

.tool-on {
    background-color: #141414;
    border-radius: 2px;
}

.tool-box {
    height: 19px;
    border: 1px solid #2a84e6;
    background-color: #161616;
}

.tool-box-in {
    width: 11px;
    height: 11px;
    border: 1px dotted #2a84e6;
}

.tee {
    font-family: 'Liberation Serif', serif;
    font-size: 20px;
}

.vsep {
    width: 1px;
    height: 22px;
    background-color: #363636;
    flex: none;
}

.tb-label {
    color: #8a8a8a;
}

.scale {
    margin-left: 2px;
    width: 26px;
}

.snapping {
    margin-left: 2px;
    width: 46px;
}

.check {
    width: 13px;
    height: 13px;
    margin-left: 11px;
    border: 2px solid #7c7c7c;
    border-radius: 1px;
    flex: none;
}

.ws {
    color: #8f8f8f;
    white-space: nowrap;
    flex: none;
}

.ws-on {
    color: #2a84e6;
}

.ws-default { margin-left: 23px; }
.ws-menu { margin-left: 14px; }
.ws-review { margin-left: 22px; }
.ws-learn { margin-left: 48px; }
.ws-small { margin-left: 45px; }
.ws-std { margin-left: 48px; }
.ws-lib { margin-left: 43px; }
.ws-main { margin-left: 46px; }
.ws-more { margin-left: 45px; }

.chevs {
    color: #b8b8b8;
    font-size: 16px;
    font-weight: 700;
    line-height: 14px;
    flex: none;
}

.sync {
    width: 19px;
    height: 14px;
    margin-left: 5px;
}

.help {
    display: flex;
    align-items: center;
    gap: 12px;
    width: 186px;
    height: 20px;
    margin-left: 13px;
    padding-left: 5px;
    background-color: #1a1a1a;
    border-radius: 2px 0 0 2px;
    color: #a5a5a5;
    flex: none;
}

/* 上半部分：项目面板、合成面板、右侧面板 */
.upper {
    display: flex;
    height: 645px;
    margin-top: 2px;
}

.project,
.comp-panel,
.strip,
.right {
    background-color: #232323;
    flex: none;
}

.project {
    width: 318px;
    margin-right: 5px;
}

.comp-panel {
    width: 1252px;
    margin-right: 6px;
    overflow: hidden;
}

.strip {
    width: 38px;
    height: 640px;
    margin-right: 5px;
}

.right {
    width: 281px;
    height: 640px;
    overflow: hidden;
}

.tabbar {
    display: flex;
    align-items: center;
    height: 27px;
}

.tabbar > span:not(.tab):not(.swatch):not(.tab-sep),
.comp-tabs svg,
.tab span {
    margin-top: 2px;
}

.tab {
    display: flex;
    align-items: center;
    gap: 13px;
    width: 57px;
    height: 27px;
    margin-left: 10px;
    padding: 0 1px 0 2px;
    border-bottom: 2px solid #b5b5b5;
    color: #b5b5b5;
    flex: none;
}

.swatch {
    display: inline-block;
    width: 10px;
    height: 10px;
    flex: none;
}

.sw-yellow { background-color: #e2d94b; }
.sw-green { background-color: #4aa84f; }
.sw-tan { background-color: #a8987b; }
.sw-blue { background-color: #6c7fdc; }
.sw-red { background-color: #b23a3a; }
.sw-aqua { background-color: #a5cfcb; }
.sw-pink { background-color: #e6bccb; }
.sw-purple { background-color: #8e2c9a; }
.sw-lav { background-color: #a9a9cf; }
.sw-sage { background-color: #b3c5ae; }

.effect-sw {
    margin-left: 36px;
}

.effect-name {
    width: 155px;
    margin-left: 11px;
    color: #7b7b7b;
    white-space: nowrap;
}

.tab-sep {
    width: 1px;
    height: 24px;
    background-color: #303030;
    flex: none;
}

.project .chevs {
    margin-left: 26px;
}

.meta {
    height: 113px;
    padding-left: 124px;
}

.meta-line {
    height: 26px;
    padding-top: 7px;
    color: #8d8d8d;
    white-space: nowrap;
}

.tri {
    display: inline-block;
    width: 0;
    height: 0;
    margin: 0 1px 1px;
    border-left: 4px solid transparent;
    border-right: 4px solid transparent;
    border-top: 5px solid #8d8d8d;
}

.tri-s {
    margin: 5px 0 0 -1px;
    border-width: 3px 3px 0;
    border-top-color: #a8a8a8;
}

.meta-wave {
    display: flex;
    align-items: center;
    height: 14px;
    margin: 18px 0 0 -119px;
    color: #8d8d8d;
    white-space: nowrap;
}

.wave {
    width: 114px;
    height: 11px;
    margin-right: 5px;
    padding: 0 1px;
    background-color: #101418;
    color: #2a84e6;
}

.search {
    display: flex;
    align-items: center;
    height: 19px;
    margin: 0 6px 7px;
    padding-left: 7px;
    background-color: #1a1a1a;
    border: 1px solid #2c2c2c;
    border-radius: 2px;
    color: #a8a8a8;
}

.list-head {
    display: flex;
    align-items: center;
    height: 20px;
    border-top: 1px solid #0f0f0f;
    border-bottom: 1px solid #0f0f0f;
    font-size: 10px;
    color: #8a8a8a;
    overflow: hidden;
}

.hsep {
    width: 1px;
    height: 11px;
    background-color: #4a4a4a;
    flex: none;
}

.list-head .hsep:first-child {
    margin-left: 15px;
}

.head-name {
    width: 235px;
    margin-left: 5px;
}

.list-head .ic13 {
    margin: 0 4px 0 3px;
    color: #b0b0b0;
}

.head-com {
    margin-left: 5px;
    white-space: nowrap;
}

.list-body {
    display: flex;
    height: 438px;
}

.list {
    width: 302px;
}

.row {
    display: flex;
    align-items: center;
    height: 19px;
    border-bottom: 1px solid #1e1e1e;
    color: #9a9a9a;
    white-space: nowrap;
}

.l0 { padding-left: 1px; }
.l1 { padding-left: 20px; }
.l2 { padding-left: 39px; }

.tw {
    width: 8px;
    height: 8px;
    color: #999;
    flex: none;
}

.fi {
    display: flex;
    align-items: center;
    width: 20px;
    margin-left: 7px;
    flex: none;
}

.folder {
    width: 14px;
    height: 11px;
}

.comp {
    width: 16px;
    height: 12px;
}

.name {
    flex: 1;
}

.row .swatch {
    width: 9px;
    height: 9px;
    margin-right: 32px;
}

.list-side {
    width: 16px;
    padding-top: 3px;
}

.tree {
    margin: 0 1px 8px 2px;
    color: #ccc;
}

.scroll-thumb {
    display: block;
    width: 14px;
    height: 62px;
    margin-left: 1px;
    background-color: #343434;
    border-radius: 7px;
}

.project-foot {
    display: flex;
    align-items: center;
    height: 19px;
    border-top: 1px solid #0f0f0f;
    color: #b0b0b0;
}

.foot-footage {
    width: 17px;
    height: 11px;
    margin-left: 3px;
}

.foot-folder {
    width: 13px;
    height: 10px;
    margin-left: 10px;
}

.foot-comp {
    width: 17px;
    height: 12px;
    margin-left: 10px;
}

.foot-rocket {
    width: 13px;
    height: 12px;
    margin-left: 9px;
}

.bpc {
    width: 46px;
    height: 16px;
    margin-left: 8px;
    padding-top: 4px;
    background-color: #1b1b1b;
    border-radius: 2px;
    font-size: 9px;
    color: #888;
    text-align: center;
}

.foot-trash {
    width: 11px;
    height: 12px;
    margin-left: 7px;
}

.pill {
    width: 45px;
    height: 14px;
    margin-left: 9px;
    background-color: #343434;
    border-radius: 7px;
}

/* 合成面板 */
.comp-tabs .x {
    margin-left: 9px;
    color: #8d8d8d;
    font-size: 13px;
}

.comp-tabs .swatch {
    margin-left: 7px;
}

.lock-ic {
    width: 8px;
    height: 10px;
    margin-left: 10px;
    color: #b0b0b0;
}

.comp-word {
    margin-left: 14px;
    color: #c6c6c6;
}

.comp-blue {
    margin-left: 4px;
    color: #2a84e6;
    white-space: nowrap;
}

.crumbs {
    display: flex;
    align-items: center;
    height: 25px;
    padding-top: 2px;
    border-bottom: 2px solid #101010;
    color: #8d8d8d;
    white-space: nowrap;
}

.crumb {
    flex: none;
}

.c-smoke {
    margin-left: 29px;
}

.c-after {
    margin-left: 11px;
}

.lt {
    width: 8px;
    height: 10px;
    margin: 0 13px 0 14px;
    color: #9a9a9a;
}

.lt-tight {
    margin-right: 3px;
}

.crumb-on {
    display: flex;
    align-items: center;
    justify-content: space-between;
    width: 218px;
    height: 18px;
    padding: 0 3px 0 9px;
    background-color: #161616;
    border: 1px solid #2c2c2c;
    border-radius: 2px;
    color: #2a84e6;
    flex: none;
}

.lt-on {
    width: 8px;
    height: 10px;
    color: #2a84e6;
}

.viewer {
    display: flex;
    height: 558px;
    padding: 12px 0 0 11px;
}

.cam-label {
    width: 135px;
    padding-top: 3px;
    color: #cfcfcf;
    white-space: nowrap;
}

.frame {
    display: flex;
    flex-direction: column;
    justify-content: center;
    width: 960px;
    height: 540px;
    padding: 0 0 9px 10px;
    background-color: #000;
    font-family: 'Noto Sans CJK JP', sans-serif;
    font-size: 33.400px;
    font-weight: 300;
    line-height: 42px;
    text-align: center;
    flex: none;
}

.jp1 {
    color: #e9b184;
    text-shadow: 1px 2px 0 #5c3d22;
}

.jp2 {
    color: #f5d6a0;
    text-shadow: 1px 2px 0 #5f4a2a;
}

.jp3 {
    color: #efca9c;
    text-shadow: 1px 2px 0 #5c4427;
}

.comp-foot {
    display: flex;
    align-items: center;
    height: 26px;
    margin-top: 7px;
    padding: 1px 0 0 5px;
    background-color: #252525;
    border-bottom: 1px solid #141414;
    color: #a8a8a8;
}

.cf-drop {
    display: flex;
    align-items: center;
    justify-content: space-between;
    height: 19px;
    padding: 0 7px;
    background-color: #212121;
    border: 1px solid #2f2f2f;
    border-radius: 2px;
    white-space: nowrap;
    flex: none;
}

.cf-50 { width: 70px; }
.cf-full { width: 86px; }
.cf-classic { width: 86px; }
.cf-active { width: 105px; }
.cf-view { width: 69px; }

.fsep {
    width: 1px;
    height: 18px;
    margin: 0 5px;
    background-color: #383838;
    flex: none;
}

.fs-a { margin: 0 3px 0 4px; }
.fs-b { margin: 0 9px 0 9px; }
.fs-c { margin: 0 4px 0 5px; }

.cf-ic {
    display: flex;
    align-items: center;
    justify-content: center;
    width: 22px;
    height: 21px;
    flex: none;
    color: #b5b5b5;
}

.cf-on {
    background-color: #1a1a1a;
    border-radius: 2px;
}

.cf-dim {
    color: #4a4a4a;
}

.plus {
    width: 24px;
    margin-left: 2px;
    color: #2a84e6;
}

.cf-time {
    width: 69px;
    height: 19px;
    padding-top: 4px;
    border: 1px solid #2f2f2f;
    border-radius: 2px;
    color: #8d8d8d;
    text-align: center;
    flex: none;
}

.cf-draft {
    display: flex;
    align-items: center;
    gap: 5px;
    width: 77px;
    height: 19px;
    margin-left: 298px;
    padding-left: 7px;
    border: 1px solid #2f2f2f;
    border-radius: 2px;
    flex: none;
}

/* 中间的缓动面板 */
.strip {
    display: flex;
    flex-direction: column;
}

.strip-tab {
    height: 28px;
    padding: 8px 0 0 15px;
    background-color: #232323;
    color: #999;
}

.strip-tab span {
    display: block;
    width: 5px;
    height: 16px;
    border-right: 1px solid #3a3a3a;
}

.strip-body {
    display: flex;
    flex-direction: column;
    align-items: flex-start;
    flex: 1;
    padding-top: 37px;
    padding-left: 4px;
    background-color: #313131;
    overflow: hidden;
}

.curve {
    width: 34px;
    height: 128px;
    overflow: visible;
    flex: none;
}

.s-small {
    display: flex;
    align-items: center;
    width: 34px;
    height: 13px;
    margin-top: 51px;
    padding-left: 6px;
    background-color: #444;
    font-size: 10px;
    color: #eee;
}

.s-chip {
    width: 9px;
    height: 9px;
    margin-right: 8px;
    background-color: #ddd;
    border-radius: 1px;
}

.s-key {
    display: flex;
    align-items: center;
    justify-content: center;
    width: 32px;
    height: 20px;
    margin-top: 3px;
    background-color: #f3b90b;
}

.s-blue {
    width: 34px;
    height: 28px;
    margin-top: 2px;
    background-color: #00649f;
}

.s-gray {
    width: 34px;
    height: 10px;
    margin-top: 4px;
    background-color: #3e3e3e;
}

.s-cap {
    width: 34px;
    height: 30px;
    margin-top: 4px;
    padding: 7px 0 0 18px;
    background-color: #fbbf00;
    overflow: hidden;
}

.cap {
    width: 20px;
    height: 20px;
}

.s-ease-on {
    width: 34px;
    height: 33px;
    margin-top: 3px;
    padding: 4px 0 0 5px;
    background-color: #85c3ee;
    color: #fff;
}

.ease-ic {
    width: 24px;
    height: 26px;
}

.s-label {
    width: 32px;
    height: 20px;
    padding-top: 4px;
    font-size: 10px;
    letter-spacing: 1px;
    color: #5d5d5d;
    text-align: center;
}

.s-label-on {
    margin-top: 4px;
    font-weight: 700;
    letter-spacing: .5px;
    color: #e6e6e6;
}

.s-ic {
    width: 32px;
    height: 33px;
    padding: 2px 0 0 4px;
    margin-top: 2px;
    color: #c8c8c8;
}

/* 右侧面板 */
.decomp-tab {
    display: flex;
    align-items: center;
    gap: 11px;
    height: 28px;
    padding-left: 12px;
    color: #a3a3a3;
}

.decomp {
    height: 309px;
    margin-bottom: 5px;
    padding: 7px 0 0 8px;
    border: 1px solid #303030;
    border-radius: 2px 0 0 2px;
    color: #7a7a7a;
}

.help-row {
    display: flex;
    justify-content: flex-end;
    height: 20px;
    padding-right: 68px;
}

.q {
    width: 25px;
    height: 20px;
    padding-top: 4px;
    border: 1px solid #5c5c5c;
    color: #6e6e6e;
    text-align: center;
}

.into {
    display: flex;
    align-items: center;
    justify-content: space-between;
    width: 202px;
    height: 23px;
    margin-top: 10px;
    white-space: nowrap;
}

.into-drop {
    display: flex;
    align-items: center;
    justify-content: space-between;
    width: 109px;
    height: 23px;
    padding: 0 6px 0 8px;
    background-color: #1c1c1c;
    border-radius: 2px;
    color: #a3a3a3;
}

.radio {
    display: flex;
    align-items: center;
    gap: 5px;
    height: 14px;
    margin: 11px 0 0 2px;
    white-space: nowrap;
}

.radio-2 {
    margin-top: 16px;
}

.dot {
    width: 11px;
    height: 11px;
    margin-right: 1px;
    border: 2px solid #7a7a7a;
    border-radius: 50%;
    flex: none;
}

.dot-on {
    background-color: #7a7a7a;
}

.btn-row {
    display: flex;
    justify-content: flex-end;
    width: 203px;
    margin-top: 16px;
}

.btn {
    width: 87px;
    height: 27px;
    padding-top: 8px;
    border: 1px solid #6a6a6a;
    border-radius: 1px;
    color: #8d8d8d;
    text-align: center;
}

.fold {
    height: 30px;
    padding: 8px 0 0 12px;
    border-bottom: 2px solid #151515;
    color: #7c7c7c;
    white-space: nowrap;
}

.char-head {
    display: flex;
    align-items: center;
    justify-content: space-between;
    height: 28px;
    padding: 0 10px 0 12px;
    color: #a5a5a5;
}

.char {
    height: 122px;
    padding: 8px 0 0 4px;
    overflow: hidden;
}

.char-top {
    display: flex;
    height: 43px;
    position: relative;
}

.char-fonts {
    display: flex;
    flex-direction: column;
    gap: 5px;
    width: 122px;
}

.fontbox {
    display: flex;
    align-items: center;
    justify-content: space-between;
    height: 19px;
    padding-left: 8px;
    background-color: #171717;
    border: 1px solid #2e2e2e;
    border-radius: 2px;
    color: #bdbdbd;
}

.fontbox i {
    display: flex;
    align-items: center;
    justify-content: center;
    width: 18px;
    height: 17px;
    border-left: 1px solid #333;
}

.char-tools {
    display: flex;
    flex-direction: column;
    align-items: center;
    width: 30px;
    margin-left: 2px;
}

.dropper {
    width: 16px;
    height: 18px;
    margin-top: 3px;
    color: #b0b0b0;
}

.bw {
    width: 20px;
    height: 17px;
    margin-top: 3px;
    background: linear-gradient(#000 50%, #fff 50%);
    border: 1px solid #a0a0a0;
}

.colors {
    width: 44px;
    height: 43px;
    margin-left: -1px;
    position: relative;
}

.fill-sw {
    position: absolute;
    top: 0;
    left: 1px;
    width: 30px;
    height: 29px;
    background-color: #fff;
    border: 1px solid #000;
    box-shadow: 0 0 0 1px #111;
    z-index: 2;
}

.stroke-sw {
    position: absolute;
    top: 14px;
    left: 14px;
    width: 30px;
    height: 29px;
    background-color: #1c1c1c;
    border: 7px solid #fff;
    box-shadow: 0 0 0 1px #000;
}

.none-sw {
    position: absolute;
    top: 30px;
    left: 2px;
    width: 11px;
    height: 11px;
    background: linear-gradient(to top right, #fff 45%, #d63b3b 45% 55%, #fff 55%);
    border: 1px solid #888;
}

.swap {
    position: absolute;
    top: 0;
    left: 33px;
    font-size: 12px;
    color: #ddd;
}

.char-line {
    height: 2px;
    width: 195px;
    margin-top: 6px;
    background-color: #3a3a3a;
}

.char-grid {
    display: grid;
    grid-template-columns: 25px 22px 26px 32px 33px 48px 12px;
    grid-auto-rows: 21px;
    align-items: center;
    width: 198px;
}

.c-ic {
    width: 18px;
    height: 16px;
    color: #b8b8b8;
}

.c-val {
    color: #2a84e6;
}

.c-unit {
    color: #707070;
}

.c-off {
    grid-column: span 2;
    color: #4c4c4c;
}

.c-tri {
    width: 0;
    height: 0;
    border-left: 3.500px solid transparent;
    border-right: 3.500px solid transparent;
    border-top: 6px solid #8a8a8a;
}

.char-last {
    display: flex;
    align-items: flex-start;
    padding-top: 3px;
}

.char-last .c-ic {
    width: 14px;
    height: 10px;
    margin: 2px 11px 0 2px;
}

.char-last .c-val {
    width: 10px;
}

.char-last .c-unit {
    width: 38px;
}

.char-last .c-tri {
    margin-top: 4px;
}

.over {
    display: flex;
    align-items: center;
    justify-content: space-between;
    width: 114px;
    height: 19px;
    margin-left: 5px;
    padding: 0 6px 0 8px;
    background-color: #1a1a1a;
    border: 1px solid #2e2e2e;
    border-radius: 2px;
    color: #a8a8a8;
    white-space: nowrap;
}

/* 时间轴 */
.timeline {
    height: 318px;
    background-color: #232323;
}

.tl-tabs {
    display: flex;
    align-items: center;
    height: 27px;
    color: #7b7b7b;
    white-space: nowrap;
}

.tt {
    display: flex;
    align-items: center;
    height: 27px;
    margin-left: 57px;
    padding-top: 2px;
    flex: none;
}

.tt .swatch {
    margin-right: 12px;
}

.tt-first {
    width: 15px;
    margin-left: 0;
}

.tt-third {
    margin-left: 51px;
}

.tt-on {
    margin-left: 42px;
    width: 247px;
    border-bottom: 2px solid #c8c8c8;
    color: #a6a6a6;
}

.tt-on .x {
    width: 20px;
    padding-left: 3px;
    color: #8d8d8d;
}

.tt-on .ic-menu {
    margin-left: 13px;
}

.tt-after {
    margin-left: 31px;
}

.tt-sep {
    margin: 0 0 0 3px;
}

.tl-tabs .chevs {
    margin-left: 18px;
}

.tl-body {
    display: flex;
    height: 279px;
    border-bottom: 1px solid #0d0d0d;
}

.tl-left {
    width: 906px;
    border-right: 1px solid #0d0d0d;
    flex: none;
    box-sizing: content-box;
}

.tl-ctrl {
    display: flex;
    align-items: center;
    height: 36px;
}

.timecode {
    width: 105px;
    padding-left: 10px;
    padding-top: 1px;
    flex: none;
}

.tc-big {
    padding-left: 5px;
    font-size: 14px;
    font-weight: 700;
    letter-spacing: .4px;
    color: #2a84e6;
}

.tc-small {
    margin-top: 2px;
    color: #1d5ca3;
    white-space: nowrap;
}

.tl-search {
    display: flex;
    align-items: center;
    width: 633px;
    height: 20px;
    padding-left: 7px;
    background-color: #191919;
    border: 1px solid #2a2a2a;
    border-radius: 2px;
    color: #a8a8a8;
    flex: none;
}

.tl-tools {
    display: flex;
    align-items: center;
    margin-left: 18px;
    color: #a5a5a5;
}

.tl-tools svg:nth-child(2) { margin-left: 18px; }
.tl-tools svg:nth-child(3) { margin-left: 13px; }
.tl-tools svg:nth-child(4) { margin-left: 12px; }
.tl-tools svg:nth-child(5) { margin-left: 19px; }

.tl-head {
    display: flex;
    align-items: center;
    height: 20px;
    padding-top: 1px;
    border-top: 1px solid #0d0d0d;
    border-bottom: 1px solid #0d0d0d;
    font-size: 9.500px;
    color: #888;
    white-space: nowrap;
}

.h-eye { width: 11px; height: 8px; margin-left: 5px; color: #b0b0b0; }
.h-spk { width: 12px; height: 12px; margin-left: 4px; color: #b0b0b0; }
.h-dot { width: 7px; height: 7px; margin-left: 5px; background-color: #b0b0b0; border-radius: 50%; flex: none; }
.h-lock { width: 9px; height: 11px; margin-left: 7px; color: #b0b0b0; }
.h-s1 { margin-left: 8px; }
.h-tag { width: 12px; height: 12px; margin-left: 13px; color: #b0b0b0; }
.h-s2 { margin-left: 6px; }
.h-num { width: 7px; margin-left: 6px; }
.h-s3 { margin-left: 18px; }
.h-src { width: 354px; margin-left: 5px; }
.h-mode { width: 31px; margin-left: 6px; }
.h-t { width: 7px; margin-left: 11px; }
.h-track { width: 43px; margin-left: 8px; }
.h-box { width: 11px; height: 11px; margin-left: 8px; background-color: #b8b8b8; display: flex; align-items: center; justify-content: center; flex: none; }
.h-box2 { margin-left: 3px; }
.h-box-in { width: 6px; height: 6px; background-color: #232323; border-radius: 50%; }
.h-box-slash { width: 7px; height: 6px; background-color: #232323; transform: skewX(-25deg); }
.h-s5 { margin-left: 4px; }
.h-sw { width: 12px; height: 12px; margin-left: 3px; color: #a5a5a5; }
.h-s5 + .h-sw { margin-left: 5px; }
.h-sl { width: 1px; height: 13px; margin-left: 8px; background-color: #a5a5a5; transform: rotate(-45deg); flex: none; }
.h-fx { width: 12px; margin-left: 5px; font-family: 'Liberation Serif', serif; font-style: italic; font-size: 15px; color: #a5a5a5; }
.h-s6 { margin-left: 15px; }
.h-par { width: 54px; margin-left: 5px; }
.h-s7 { margin-left: 57px; }

.layer,
.prop {
    display: flex;
    align-items: center;
    height: 17px;
    padding-top: 1px;
    border-bottom: 1px solid #1d1d1d;
    white-space: nowrap;
}

.layer {
    background-color: #2a2a2a;
    color: #a8a8a8;
}

.prop {
    background-color: #252525;
    color: #8d8d8d;
}

.c-eye {
    display: flex;
    align-items: center;
    justify-content: center;
    width: 13px;
    height: 13px;
    margin-left: 5px;
    flex: none;
}

.c-eye.on {
    background-color: #1f1f1f;
}

.c-eye-ic {
    width: 11px;
    height: 8px;
    color: #c0c0c0;
}

.c-spk {
    width: 13px;
    height: 12px;
    margin-left: 2px;
    color: #b0b0b0;
    flex: none;
}

.c-box {
    width: 13px;
    height: 13px;
    margin-left: 2px;
    background-color: #202020;
    flex: none;
}

.l-tw {
    width: 7px;
    height: 8px;
    margin-left: 11px;
    color: #999;
}

.l-sw {
    width: 12px;
    height: 12px;
    margin-left: 3px;
    flex: none;
}

.l-num {
    width: 30px;
    margin-left: 10px;
}

.l-ic {
    width: 18px;
    display: flex;
    align-items: center;
    flex: none;
}

.l-name {
    width: 486px;
    font-weight: 500;
    font-size: 11.500px;
    letter-spacing: .2px;
}

.l-name3 {
    width: 341px;
}

.sw-col {
    display: flex;
    align-items: center;
    width: 138px;
    flex: none;
    position: relative;
}

.sw-ic {
    display: flex;
    align-items: center;
    justify-content: center;
    width: 13px;
    height: 13px;
    color: #c0c0c0;
    flex: none;
}

.sw-empty {
    width: 13px;
    height: 13px;
    margin: 0 2px;
    flex: none;
}

.sw-b {
    background-color: #202020;
}

.slash {
    width: 1px;
    height: 15px;
    background-color: #b8b8b8;
    transform: rotate(45deg);
}

.sw-gap { width: 47px; flex: none; }
.sw-gap3 { margin-left: 47px; margin-right: 2px; }
.sw-none { width: 13px; height: 13px; flex: none; }

.sw-square {
    width: 13px;
    height: 13px;
    flex: none;
}

.dotted {
    display: flex;
    align-items: center;
    justify-content: center;
    width: 13px;
    height: 17px;
    margin-left: 2px;
    border-left: 1px dotted #999;
    border-right: 1px dotted #999;
    flex: none;
    color: #bbb;
}

.dotted-top {
    border-top: 1px dotted #999;
}

.dotted-low {
    border-bottom: 1px dotted #999;
}

.dotted-solid {
    border: 1px solid #999;
    border-bottom: 0;
    border-top: 0;
}

.l-spiral,
.p-spiral,
.mode-spiral {
    width: 12px;
    height: 12px;
    color: #9c9c9c;
}

.l-spiral {
    margin-left: 1px;
}

.parent {
    display: flex;
    align-items: center;
    justify-content: space-between;
    width: 89px;
    height: 14px;
    margin-left: 7px;
    padding: 0 6px 0 8px;
    background-color: #1b1b1b;
}

.mode-col {
    display: flex;
    align-items: center;
    gap: 5px;
    width: 145px;
    flex: none;
}

.mini {
    display: flex;
    align-items: center;
    justify-content: space-between;
    width: 34px;
    height: 14px;
    padding: 0 4px 0 7px;
    background-color: #1b1b1b;
}

.mini span {
    width: 11px;
    overflow: hidden;
}

.p-tw {
    width: 9px;
    height: 7px;
    margin-left: 91px;
    color: #999;
}

.p-tw-r {
    width: 7px;
    height: 9px;
    margin-left: 92px;
}

.p-gname {
    margin-left: 9px;
    width: 533px;
}

.p-val {
    color: #2a84e6;
    word-spacing: -1.500px;
}

.p-nav {
    display: flex;
    align-items: center;
    width: 109px;
    padding-left: 7px;
    flex: none;
}

.nav-l,
.nav-r {
    width: 0;
    height: 0;
    border-top: 4px solid transparent;
    border-bottom: 4px solid transparent;
}

.nav-l {
    border-right: 6px solid #b0b0b0;
}

.nav-r {
    border-left: 6px solid #555;
}

.nav-key {
    display: flex;
    align-items: center;
    justify-content: center;
    width: 14px;
    height: 14px;
    margin: 0 6px;
    background-color: #2e2e2e;
}

.nav-dia {
    width: 7px;
    height: 7px;
    background-color: #2a84e6;
    transform: rotate(45deg);
}

.p-dot {
    width: 2px;
    height: 1px;
    background-color: #444;
    flex: none;
}

.p-watch {
    width: 12px;
    height: 12px;
    margin-left: 8px;
    color: #b0b0b0;
}

.p-watch-on {
    display: flex;
    align-items: center;
    justify-content: center;
    width: 16px;
    height: 15px;
    margin-left: 6px;
    background-color: #2e2e2e;
}

.p-watch-on .p-watch {
    margin-left: 0;
}

.p-graph {
    width: 11px;
    height: 9px;
    margin-left: 4px;
    color: #a0a0a0;
}

.p-name {
    width: 503px;
    margin-left: 8px;
}

.p-name2 {
    margin-left: 9px;
    width: 485px;
}

.prop .p-val {
    flex: none;
}

.p-spiral {
    margin-left: auto;
    margin-right: 102px;
}

/* 时间图 */
.tl-right {
    position: relative;
    width: 998px;
    flex: none;
    overflow: hidden;
}

.nav-bar,
.work {
    display: flex;
    align-items: stretch;
}

.nav-bar {
    height: 10px;
    margin-top: 7px;
    border-top: 1px solid #0d0d0d;
}

.nav-h {
    width: 7px;
    background-color: #2a84e6;
    border-radius: 3px;
    flex: none;
}

.nav-fill {
    flex: 1;
    background-color: #6a6a6a;
}

.ruler {
    display: flex;
    height: 19px;
    margin-left: -21px;
    border-top: 1px solid #0d0d0d;
}

.tick {
    position: relative;
    width: 55.770px;
    padding-top: 1px;
    flex: none;
    font-size: 10.500px;
    color: #8f8f8f;
    text-align: center;
}

.tick b {
    font-weight: 400;
}

/* 刻度线 */
.tick::after {
    content: "";
    position: absolute;
    left: 50%;
    bottom: 0;
    width: 1px;
    height: 4px;
    background-color: #8f8f8f;
}

.work {
    height: 16px;
    border-top: 1px solid #0d0d0d;
}

.work-fill {
    position: relative;
    flex: 1;
    background-color: #666;
}

.green-bar {
    height: 4px;
    margin-left: 7px;
    margin-right: 5px;
    background-color: #14b014;
}

.track {
    display: flex;
    align-items: stretch;
    height: 17px;
    padding-left: 7px;
    background-color: #3a3a3a;
    border-top: 1px solid #1d1d1d;
    position: relative;
}

.track::before {
    content: "";
    position: absolute;
    top: 0;
    bottom: 0;
    left: 0;
    width: 7px;
    background-color: #2a2a2a;
}

.track:nth-child(5) {
    border-top: 1px solid #0d0d0d;
}

.bar-a {
    width: 28px;
    background-color: #7b8a7d;
    border-top-left-radius: 5px;
}

.bar-b {
    width: 38px;
    background-color: #505850;
    border: 1px solid #5e665e;
    border-left: 0;
}

.bar-pink {
    position: relative;
    width: 986px;
    background-color: #8c7a80;
}

.bar-tan {
    width: 978px;
    background-color: #78705f;
    border-radius: 5px 5px 0 0;
}

.mark {
    position: absolute;
    bottom: 0;
    width: 9px;
    height: 9px;
    background-color: #bdbdbd;
    clip-path: polygon(50% 0, 100% 40%, 100% 100%, 0 100%, 0 40%);
}

.m-work { left: 136px; }
.m-1 { left: -4px; }
.m-2 { left: 38px; }
.m-3 { left: 256px; }

.t-beam .beam {
    width: 5px;
    height: 13px;
    margin: 1px 0 0 327px;
    border-top: 1px solid #b8d4ee;
    border-bottom: 1px solid #b8d4ee;
    background: linear-gradient(#b8d4ee, #b8d4ee) center/1px 100% no-repeat;
}

.t-keys {
    align-items: center;
}

.k-left {
    width: 8px;
    height: 10px;
    margin-left: -2px;
    background-color: #b8b8b8;
    clip-path: polygon(100% 0, 100% 100%, 60% 100%, 0 50%, 60% 0);
    position: relative;
}

.k-beam {
    width: 9px;
    height: 10px;
    margin-left: 9px;
    background-color: #b8b8b8;
    clip-path: polygon(0 0, 100% 0, 100% 20%, 70% 50%, 100% 80%, 100% 100%, 0 100%, 0 80%, 30% 50%, 0 20%);
}

.k-dia {
    width: 7px;
    height: 7px;
    margin-left: 301px;
    background-color: #8e9aa6;
    transform: rotate(45deg);
}

.tl-rest {
    height: 60px;
    margin-left: 7px;
    background-color: #232323;
}

.playhead {
    position: absolute;
    top: 43px;
    bottom: 0;
    left: 336px;
    width: 1px;
    background-color: #3d8fe0;
}

.phead-top {
    position: absolute;
    top: 26px;
    left: 331px;
    width: 11px;
    height: 16px;
    background-color: #2a84e6;
    clip-path: polygon(0 0, 100% 0, 100% 60%, 50% 100%, 0 60%);
}

.tl-foot {
    display: flex;
    align-items: center;
    height: 12px;
    padding-left: 4px;
    overflow: hidden;
    color: #a8a8a8;
}

.tf-box {
    display: flex;
    align-items: flex-start;
    width: 16px;
    height: 12px;
    margin-right: 3px;
    padding: 3px 0 0 2px;
    background-color: #333;
    flex: none;
}

.tf-ic {
    margin: 3px 7px 0 0;
}

.render {
    margin: 5px 0 0 18px;
    width: 811px;
    color: #8d8d8d;
    white-space: nowrap;
    flex: none;
}

.render em {
    font-style: normal;
    color: #e08a2e;
}

.zoom-tri {
    width: 0;
    height: 0;
    margin-top: 6px;
    border-left: 5px solid transparent;
    border-right: 5px solid transparent;
    border-bottom: 4px solid #a8a8a8;
    flex: none;
}

.zoom-knob {
    width: 10px;
    height: 10px;
    margin: 7px 0 0 9px;
    border: 2px solid #a8a8a8;
    border-radius: 50%;
    flex: none;
}

.zoom-line {
    width: 58px;
    height: 2px;
    margin-top: 8px;
    background-color: #3d3d3d;
    flex: none;
}

.zoom-big {
    margin-left: 2px;
    border-left-width: 9px;
    border-right-width: 9px;
    border-bottom-width: 8px;
}
```
